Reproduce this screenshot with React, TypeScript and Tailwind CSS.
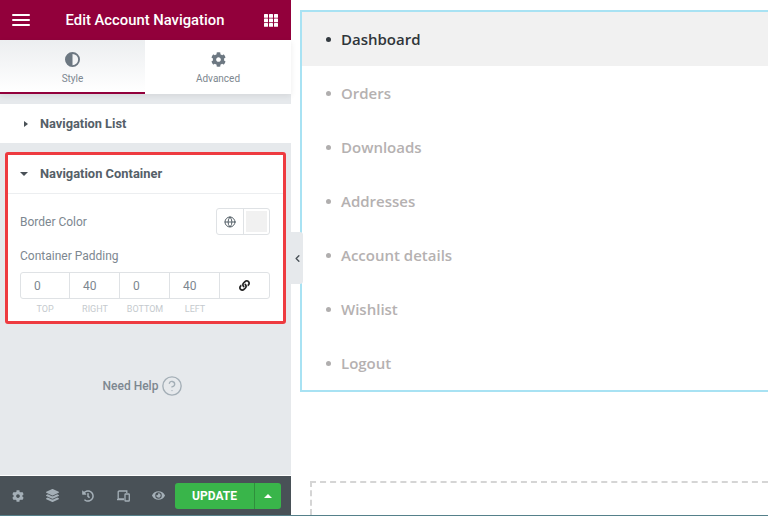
import { ChevronLeft, CircleHelp, Globe } from "lucide-react";
import { FaCog, FaEye, FaHistory, FaLayerGroup, FaLink } from "react-icons/fa";

const navItems = ["Dashboard", "Orders", "Downloads", "Addresses", "Account details", "Wishlist", "Logout"];

const paddingFields = [
  { label: "TOP", value: "0" },
  { label: "RIGHT", value: "40" },
  { label: "BOTTOM", value: "0" },
  { label: "LEFT", value: "40" },
];

function ContrastIcon() {
  return (
    <svg width="15" height="15" viewBox="0 0 16 16">
      <circle cx="8" cy="8" r="7" fill="none" stroke="#6d7882" strokeWidth="2" />
      <path d="M8 1a7 7 0 0 0 0 14z" fill="#6d7882" />
    </svg>
  );
}

function HamburgerIcon() {
  return (
    <svg width="18" height="12" viewBox="0 0 18 12" fill="white">
      <rect x="0" y="0" width="18" height="2" rx="1" />
      <rect x="0" y="5" width="18" height="2" rx="1" />
      <rect x="0" y="10" width="18" height="2" rx="1" />
    </svg>
  );
}

function GridIcon() {
  return (
    <svg width="14" height="13" viewBox="0 0 14 13" fill="white">
      {[0, 5, 10].map((x) =>
        [0, 4.5, 9].map((y) => <rect key={`${x}-${y}`} x={x} y={y} width="4" height="3.8" rx="0.5" />)
      )}
    </svg>
  );
}

function DevicesIcon() {
  return (
    <svg width="13" height="12" viewBox="0 0 13 12" fill="none" stroke="#a4afb7" strokeWidth="1.3">
      <path d="M7 9H1.2V2a1 1 0 0 1 1-1h7.6v2" />
      <path d="M0 9.6h7" />
      <rect x="8" y="4" width="4.3" height="7" rx="0.6" />
    </svg>
  );
}

function Panel() {
  return (
    <aside className="flex h-full w-[291px] shrink-0 flex-col bg-[#e6e9ec] font-['Roboto',sans-serif]">
      <header className="flex h-[40px] items-center justify-between bg-[#92003b] pl-[12px] pr-[13px] text-white">
        <HamburgerIcon />
        <h1 className="mr-[4px] text-[14.8px] font-medium">Edit Account Navigation</h1>
        <GridIcon />
      </header>

      <div className="flex h-[54px] bg-white shadow-[0_2px_6px_rgba(0,0,0,0.08)]">
        <div className="flex w-[145px] flex-col items-center border-b-2 border-[#92003b] bg-gradient-to-b from-[#eceef0] to-white pt-[12px]">
          <ContrastIcon />
          <span className="mt-[4px] text-[10px] text-[#7d8790]">Style</span>
        </div>
        <div className="flex flex-1 flex-col items-center pt-[12px]">
          <FaCog className="h-[15px] w-[15px] text-[#6d7882]" />
          <span className="mt-[4px] text-[10px] text-[#7d8790]">Advanced</span>
        </div>
      </div>

      <section className="mt-[10px] flex h-[39px] items-center bg-white pl-[24px]">
        <span className="h-0 w-0 border-y-[3.5px] border-l-[4px] border-y-transparent border-l-[#495157]" />
        <h2 className="ml-[12px] text-[12.8px] font-bold text-[#556068]">Navigation List</h2>
      </section>

      <section className="mx-[5px] mt-[9px] h-[172px] w-[281px] rounded-[3px] border-[3px] border-[#ee3b40] bg-white">
        <div className="flex h-[39px] items-center border-b border-[#eceef0] pl-[12px]">
          <span className="h-0 w-0 border-x-[4px] border-t-[4px] border-x-transparent border-t-[#495157]" />
          <h2 className="ml-[12px] text-[12.9px] font-bold text-[#556068]">Navigation Container</h2>
        </div>
        <div className="pl-[12px] pr-[13px]">
          <div className="mt-[14px] flex items-center justify-between">
            <span className="text-[12px] text-[#7d8790]">Border Color</span>
            <div className="flex h-[27px] w-[54px] rounded-[3px] border border-[#dfe2e5]">
              <div className="flex w-[27px] items-center justify-center border-r border-[#dfe2e5]">
                <Globe className="h-[12px] w-[12px] text-[#556068]" />
              </div>
              <div className="flex-1 p-[2px]">
                <div className="h-full w-full bg-[#f1f1f1]" />
              </div>
            </div>
          </div>
          <div className="mt-[12px] text-[12px] text-[#7d8790]">Container Padding</div>
          <div className="mt-[7px] flex h-[27px] w-[250px] rounded-[3px] border border-[#dfe2e5]">
            {paddingFields.map((field) => (
              <div key={field.label} className="flex w-[50px] items-center border-r border-[#dfe2e5] pl-[13px] text-[12px] text-[#7d8790] first:w-[49px]">
                {field.value}
              </div>
            ))}
            <div className="flex flex-1 items-center justify-center">
              <FaLink className="h-[11px] w-[11px] text-[#222]" />
            </div>
          </div>
          <div className="mt-[4px] flex w-[250px]">
            {paddingFields.map((field) => (
              <span key={field.label} className="w-[50px] text-center text-[9px] leading-[12px] text-[#c5cace]">
                {field.label}
              </span>
            ))}
          </div>
        </div>
      </section>

      <div className="mt-[51px] flex items-center justify-center gap-[3px] pr-[5px] text-[12px] font-medium text-[#7d8790]">
        Need Help
        <CircleHelp className="h-[22px] w-[22px] text-[#a4afb7]" strokeWidth={1.5} />
      </div>

      <footer className="mt-auto flex h-[40px] items-center border-t border-white bg-[#495157] pl-[12px] text-[#a4afb7]">
        <FaCog className="h-[12px] w-[12px]" />
        <FaLayerGroup className="ml-[22px] h-[13px] w-[13px]" />
        <FaHistory className="ml-[23px] h-[12px] w-[12px]" />
        <span className="ml-[23px] flex"><DevicesIcon /></span>
        <FaEye className="ml-[22px] h-[13px] w-[13px]" />
        <div className="ml-[10px] flex h-[26px] w-[106px] overflow-hidden rounded-[3px] bg-[#39b54a] text-white">
          <span className="flex w-[80px] items-center justify-center border-r border-[#2f8f3c] text-[12px] font-bold">UPDATE</span>
          <span className="flex flex-1 items-center justify-center">
            <span className="h-0 w-0 border-x-[4px] border-b-[4px] border-x-transparent border-b-white" />
          </span>
        </div>
      </footer>
    </aside>
  );
}

export default function App() {
  return (
    <div className="relative flex h-[516px] w-[768px] overflow-hidden border-b border-[#55808a] bg-white">
      <Panel />
      <div className="absolute left-[291px] top-[232px] flex h-[52px] w-[12px] items-center justify-center rounded-r-[3px] bg-[#e6e9ec]">
        <ChevronLeft className="h-[11px] w-[11px] text-[#495157]" strokeWidth={3} />
      </div>
      <main className="flex min-w-0 flex-1 flex-col pl-[9px] pt-[10px] font-['Open_Sans',sans-serif]">
        <ul className="-mr-[10px] h-[382px] border-2 border-[#a8e2f3]">
          {navItems.map((item, index) => (
            <li key={item} className={`flex h-[54.1px] items-center pl-[24px] text-[15px] font-semibold ${index === 0 ? "bg-[#f1f1f1] text-[#30353a]" : "text-[#b5b1b1]"}`}>
              <span className={`h-[5px] w-[5px] rounded-full ${index === 0 ? "bg-[#333a40]" : "bg-[#b0aeae]"}`} />
              <span className="ml-[10px]">{item}</span>
            </li>
          ))}
        </ul>
        <div className="-mr-[10px] ml-[10px] mt-[89px] flex-1 border-l-2 border-t-2 border-dashed border-[#d5d5d5]" />
      </main>
    </div>
  );
}
